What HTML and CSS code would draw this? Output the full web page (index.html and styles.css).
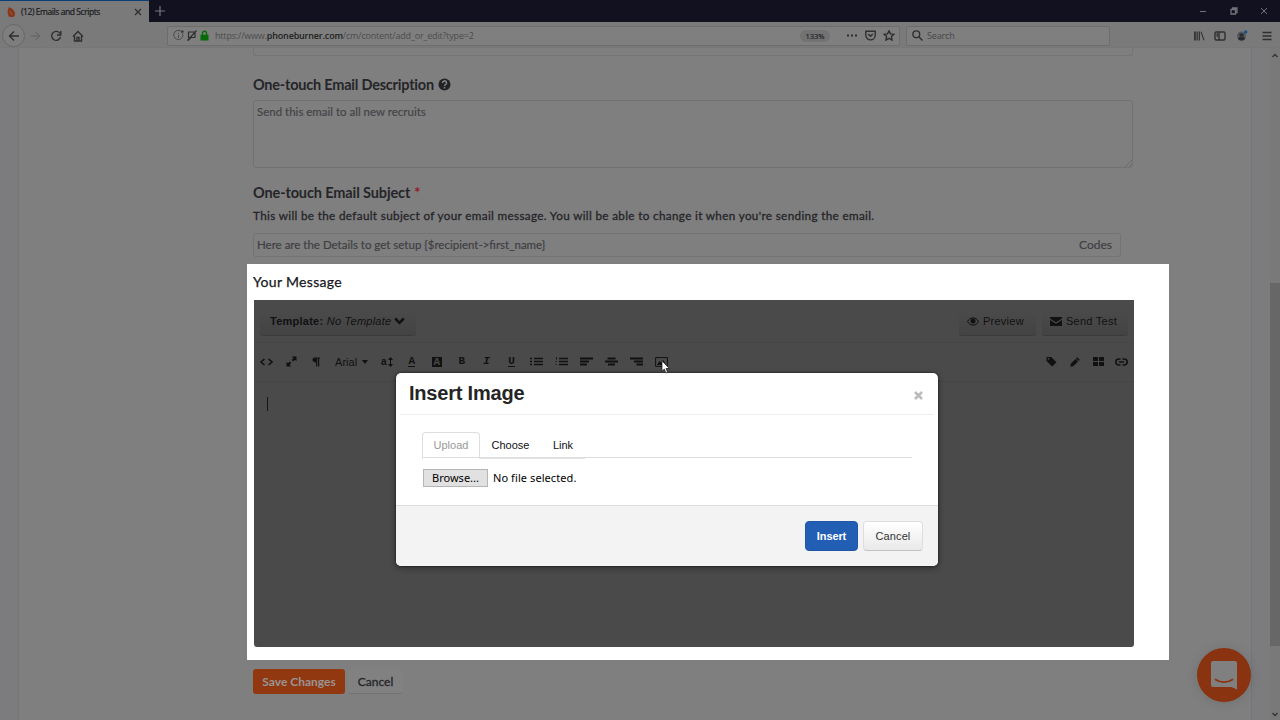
FILE: index.html
```
<!DOCTYPE html>
<html>
<head>
  <meta charset="utf-8">
  <title>(12) Emails and Scripts</title>
  <link rel="stylesheet" href="styles.css">
</head>
<body>
  <!-- Browser window -->
  <div class="tab-strip">
    <div class="tab">
      <svg class="favicon" width="9" height="10" viewBox="0 0 9 10"><path d="M2 0C4 1 8 3 8 6.500a3.500 3.500 0 0 1-7 .5C0 5 1 2 2 0z" fill="#8a3517"/><path d="M2.500 4l3 4" stroke="#7b6a62"/></svg>
      <span class="tab-title">(12) Emails and Scripts</span>
      <svg width="8" height="8" viewBox="0 0 8 8" class="line"><path d="M1 1l6 6M7 1L1 7"/></svg>
    </div>
    <svg class="new-tab" width="10" height="10" viewBox="0 0 10 10"><path d="M5 0v10M0 5h10"/></svg>
    <div class="window-buttons">
      <svg width="8" height="8" viewBox="0 0 8 8"><path d="M1 4.500h6"/></svg>
      <svg width="8" height="8" viewBox="0 0 8 8"><path d="M1 2.500h4.500V7H1zM2.500 2.500V1H7v4.500H5.500" stroke-width="1.300"/></svg>
      <svg width="8" height="8" viewBox="0 0 8 8"><path d="M1 1l6 6M7 1L1 7"/></svg>
    </div>
  </div>
  <div class="toolbar">
    <div class="nav">
      <span class="back"><svg width="12" height="12" viewBox="0 0 12 12" class="line"><path d="M11 6H1.500M6 1.500L1.500 6 6 10.500"/></svg></span>
      <svg width="11" height="12" viewBox="0 0 12 12" class="line faint"><path d="M1 6h9.500M6 1.500L10.500 6 6 10.500"/></svg>
      <svg width="12" height="12" viewBox="0 0 12 12" class="line"><path d="M10 3.500A4.500 4.500 0 1 0 10.500 7M10.800 1v4H7"/></svg>
      <svg width="12" height="12" viewBox="0 0 12 12" class="line"><path d="M1 6.500L6 1.500l5 5M2.500 6v5h7V6M5 11V7.500h2V11"/></svg>
    </div>
    <div class="url-bar">
      <svg width="11" height="11" viewBox="0 0 11 11" class="thin"><path d="M8 1.200a4.600 4.600 0 1 0 1.700 2.300M5.500 5v3M5.500 3v1"/><circle cx="9.300" cy="1.700" r="1" fill="#333"/></svg>
      <svg width="10" height="11" viewBox="0 0 10 11" class="line"><path d="M1.500 2h6.500v5.500H4L2 9.500V7.500h-.5zM.5 10.500l9-10" stroke-width="1.200"/></svg>
      <svg width="9" height="11" viewBox="0 0 9 11"><path d="M2.500 5V3.200a2 2 0 0 1 4 0V5" stroke="#076b07" stroke-width="1.400" fill="none"/><path d="M.5 4.800h8V10.500h-8z" fill="#076b07"/></svg>
      <span class="url">https://www.<b>phoneburner.com</b>/cm/content/add_or_edit?type=2</span>
      <span class="zoom">133%</span>
      <svg width="12" height="11" viewBox="0 0 12 11"><path d="M1 4.500h2v2H1zM5 4.500h2v2H5zM9 4.500h2v2H9z" fill="#2f2f30"/></svg>
      <svg width="11" height="11" viewBox="0 0 11 11" class="line"><path d="M.8 1.200h9.400v4a4.700 4.700 0 0 1-9.400 0zM3.200 4l2.300 2.200L7.800 4"/></svg>
      <svg width="12" height="11" viewBox="0 0 12 11" class="line"><path d="M6 .8l1.500 3.100 3.400.4-2.500 2.300.7 3.400L6 8.300 2.900 10l.7-3.400-2.500-2.300 3.400-.4z"/></svg>
    </div>
    <div class="search-bar">
      <svg width="11" height="11" viewBox="0 0 11 11" class="line"><circle cx="4.300" cy="4.300" r="3.400"/><path d="M7 7l3.500 3.500"/></svg>
      <span>Search</span>
    </div>
    <div class="toolbar-icons">
      <svg width="12" height="10" viewBox="0 0 12 10"><path d="M1 .5h1.800v9H1zM3.500.5h1.300v9H3.500zM5.700.5h1.300v9H5.700zM7.500 1l1-.4 3 8.500-1 .4z" fill="#333"/></svg>
      <svg width="12" height="10" viewBox="0 0 12 10" class="line"><rect x="1" y="1" width="10" height="8" rx="1.200"/><path d="M5 1v8M2.500 3.300h1.500M2.500 5h1.500"/></svg>
      <svg width="12" height="11" viewBox="0 0 12 11"><circle cx="5.500" cy="6" r="4.500" fill="#56585b"/><path d="M3.500 3.500h4v3h-4zM2 9c0-3 7-3 7 0-2 2-5 2-7 0z" fill="#292a2e"/><circle cx="9.700" cy="2" r="1.700" fill="#184e90"/></svg>
      <svg width="10" height="10" viewBox="0 0 10 10" class="line"><path d="M.5 1.500h9M.5 5h9M.5 8.500h9"/></svg>
    </div>
  </div>

  <!-- Page -->
  <div class="viewport">
    <div class="page">
      <div class="field-end"></div>
      <div class="label">
        <span class="label-text description">One-touch Email Description</span>
        <svg width="13" height="13" viewBox="0 0 13 13"><circle cx="6.500" cy="6.500" r="6" fill="#232326"/><path d="M4.500 5a2 2 0 1 1 3 1.600c-.8.4-1 .7-1 1.400M6.500 9v1.600" fill="none" stroke="#7f7f7f" stroke-width="1.600"/></svg>
      </div>
      <div class="description-box"><span>Send this email to all new recruits</span>
        <svg width="7" height="7" viewBox="0 0 7 7"><path d="M0 7l7-7M4 7l3-3" stroke="#606060" stroke-width=".7"/></svg>
      </div>
      <div class="label subject-label"><span class="label-text">One-touch Email Subject</span><span class="required">*</span></div>
      <div class="help"><span>This will be the default subject of your email message. You will be able to change it when you're sending the email.</span></div>
      <div class="subject-box"><span class="subject-text">Here are the Details to get setup {$recipient-&gt;first_name}</span><span class="codes">Codes</span></div>

      <div class="message">
        <div class="message-title">Your Message</div>
        <div class="editor">
          <div class="editor-header">
            <div class="editor-button template"><b>Template:</b>&nbsp;<i>No Template</i>
              <svg width="11" height="8" viewBox="0 0 11 8"><path d="M1.200 1.500l4.300 4.300 4.300-4.300" fill="none" stroke="#111" stroke-width="2.500"/></svg>
            </div>
            <div class="editor-button preview">
              <svg width="12" height="9" viewBox="0 0 12 9"><path d="M.5 4.500C3-.3 9-.3 11.500 4.500 9 9.300 3 9.300.5 4.500z" fill="none" stroke="#111"/><circle cx="6" cy="4" r="2.500" fill="#111"/></svg>
              <span>Preview</span>
            </div>
            <div class="editor-button send">
              <svg width="12" height="9" viewBox="0 0 12 9"><path d="M0 0h12v1.500L6 5.300 0 1.500zM0 3l6 3.700L12 3v6H0z" fill="#111"/></svg>
              <span>Send Test</span>
            </div>
          </div>
          <div class="format-bar">
            <span><svg width="13" height="8" viewBox="0 0 13 8"><path d="M4.500 1L1 4l3.500 3M8.500 1L12 4 8.500 7"/></svg></span>
            <span><svg width="11" height="11" viewBox="0 0 11 11"><path class="solid" d="M5.800.5h4.700v4.700L9 3.800 7.300 5.500 5.700 3.900l1.600-1.700zM.5 5.800L2 7.200l1.700-1.700 1.500 1.600-1.600 1.700 1.500 1.700H.5z"/></svg></span>
            <span><svg width="8" height="10" viewBox="0 0 8 10"><path class="solid" d="M3 .5h5v1H7.200v8H6v-8h-.8v8H4V5.500C-.5 5.500-.5.500 3 .5z"/></svg></span>
            <span class="font-name">Arial <i class="caret"></i></span>
            <span class="size">a<svg width="5" height="10" viewBox="0 0 5 10"><path d="M2.500 2v6" stroke-width="1"/><path class="solid" d="M0 3L2.500 0 5 3zM0 7l2.500 3L5 7z"/></svg></span>
            <span><b class="under">A</b></span>
            <span><b class="inverse">A</b></span>
            <span><b>B</b></span>
            <span><b class="italic">I</b></span>
            <span><b class="under">U</b></span>
            <span><svg width="13" height="9" viewBox="0 0 13 9"><path d="M4 1.500h9M4 4.500h9M4 7.500h9M0 1.500h2M0 4.500h2M0 7.500h2" stroke-width="1.700"/></svg></span>
            <span><svg width="13" height="9" viewBox="0 0 13 9"><path d="M4 1.500h9M4 4.500h9M4 7.500h9" stroke-width="1.700"/><path d="M1.500 0v2.500M.5 4.500h1.500M.5 7.500h1.500" stroke-width=".8"/></svg></span>
            <span><svg width="13" height="9" viewBox="0 0 13 9"><path d="M0 1.500h13M0 4.500h9M0 7.500h7" stroke-width="1.800"/></svg></span>
            <span><svg width="13" height="9" viewBox="0 0 13 9"><path d="M2.500 1.500h8M0 4.500h13M3 7.500h7" stroke-width="1.800"/></svg></span>
            <span><svg width="13" height="9" viewBox="0 0 13 9"><path d="M0 1.500h13M4 4.500h9M6.500 7.500H13" stroke-width="1.800"/></svg></span>
            <span><svg width="13" height="10" viewBox="0 0 13 10"><path d="M.6.6h11.800v8.800H.6z" stroke-width="1"/><path class="solid" d="M2 8l2.500-4 2 2L8.500 3 11 8z"/></svg></span>
            <div class="format-right">
              <span><svg width="11" height="11" viewBox="0 0 11 11"><path class="solid" d="M.5 1h4.700l5.300 5.300-4.300 4.200L.5 5zM2.500 2a.8.8 0 1 0 .1 0z" fill-rule="evenodd"/></svg></span>
              <span><svg width="10" height="10" viewBox="0 0 10 10"><path class="solid" d="M7.300.3L9.700 2.700 8.500 4 6 1.500zM5.500 2L8 4.500 3.200 9.300.3 9.700l.5-2.900z"/></svg></span>
              <span><svg width="11" height="9" viewBox="0 0 11 9"><path class="solid" d="M0 0h5v4H0zM6 0h5v4H6zM0 5h5v4H0zM6 5h5v4H6z"/></svg></span>
              <span><svg width="13" height="8" viewBox="0 0 13 8"><path d="M5.500 1H3.800a3 3 0 0 0 0 6h1.700M7.500 1h1.700a3 3 0 0 1 0 6H7.500M4 4h5"/></svg></span>
            </div>
          </div>
          <div class="editor-body"><span class="text-caret"></span></div>

          <div class="modal">
            <div class="modal-header">
              <h3>Insert Image</h3>
              <svg width="9" height="9" viewBox="0 0 9 9"><path d="M1 1l7 7M8 1L1 8" stroke="#bbb" stroke-width="2.500"/></svg>
            </div>
            <div class="modal-body">
              <div class="modal-tabs">
                <span class="modal-tab active">Upload</span>
                <span class="modal-tab choose">Choose</span>
                <span class="modal-tab link">Link</span>
              </div>
              <div class="file-row">
                <span class="browse">Browse...</span>
                <span class="file-name">No file selected.</span>
              </div>
            </div>
            <div class="modal-footer">
              <span class="modal-button primary">Insert</span>
              <span class="modal-button">Cancel</span>
            </div>
          </div>
          <svg class="cursor" width="9" height="14" viewBox="0 0 9 14"><path d="M1 .8v10.400l2.300-2.100 1.600 3.900 1.700-.7L5 8.500h3.300z" fill="#fff" stroke="#111" stroke-width=".7"/></svg>
        </div>
      </div>

      <div class="actions">
        <span class="save">Save Changes</span>
        <span class="cancel">Cancel</span>
      </div>
    </div>
    <div class="scrollbar">
      <svg width="6" height="5" viewBox="0 0 6 5"><path d="M.5 4L3 1.500 5.500 4"/></svg>
      <div class="thumb"></div>
      <svg width="6" height="5" viewBox="0 0 6 5"><path d="M.5 1L3 3.500 5.500 1"/></svg>
    </div>
  </div>

  <div class="chat">
    <svg width="26" height="29" viewBox="0 0 26 29"><path d="M2 0h22a2 2 0 0 1 2 2v26.500L20.500 26H2a2 2 0 0 1-2-2V2a2 2 0 0 1 2-2z" fill="#808080"/><path d="M4.500 18.500c5 3.600 12 3.600 17 0" fill="none" stroke="#8a3311" stroke-width="1.700" stroke-linecap="round"/></svg>
  </div>
</body>
</html>
```
FILE: styles.css
```
* {
  box-sizing: border-box;
}
body {
  margin: 0;
  width: 1280px;
  height: 720px;
  overflow: hidden;
  position: relative;
  display: flex;
  flex-direction: column;
  background: #7f7f7f;
  color: #252529;
  font-family: Lato, "Open Sans", sans-serif;
}
svg {
  display: block;
  flex: none;
}
span, b, h3 {
  white-space: nowrap;
}

/* browser */
.tab-strip {
  height: 22px;
  flex: none;
  display: flex;
  align-items: center;
  background: #11111f;
  font-family: "Open Sans", sans-serif;
}
.tab {
  width: 149px;
  height: 22px;
  display: flex;
  align-items: center;
  padding: 0 7px 0 7px;
  border-top: 1px solid #0b4078;
  background: #7a7a7b;
}
.tab-title {
  margin-left: 5px;
  flex: 1;
  font-size: 8.5px;
  letter-spacing: -0.43px;
  color: #1a1a1c;
  -webkit-text-stroke: 0.2px #1a1a1c;
}
.line {
  fill: none;
  stroke: #2f2f30;
  stroke-width: 1.4;
}
.thin {
  fill: none;
  stroke: #444;
  stroke-width: 0.9;
}
.faint {
  stroke: #5d5d5e;
  stroke-width: 1;
}
.new-tab {
  margin-left: 6px;
  stroke: #77777d;
  stroke-width: 1.2;
}
.window-buttons {
  margin-left: auto;
  padding-right: 12px;
  display: flex;
  gap: 22.500px;
  fill: none;
  stroke: #72727a;
  stroke-width: 1;
}
.toolbar {
  height: 26px;
  flex: none;
  display: flex;
  align-items: center;
  padding-top: 2px;
  background: #7a7a7b;
  border-bottom: 1px solid #777778;
  font-family: "Open Sans", sans-serif;
  font-size: 9px;
}
.nav {
  width: 167px;
  display: flex;
  align-items: center;
  gap: 9.500px;
  padding-left: 2px;
}
.nav .back {
  width: 23px;
  height: 23px;
  margin-right: -5px;
  border: 1px solid #686869;
  border-radius: 50%;
  display: flex;
  align-items: center;
  justify-content: center;
  background: #7e7e7e;
}
.url-bar {
  width: 733px;
  height: 20px;
  border: 1px solid #6d6d6e;
  border-radius: 2px;
  background: #7f7f7f;
  display: flex;
  align-items: center;
  gap: 3px;
  padding: 0 4px 0 5px;
}
.url {
  margin-left: 3px;
  flex: 1;
  color: #4c4c4d;
  letter-spacing: -0.18px;
}
.url b {
  font-weight: 600;
  color: #1e1e20;
}
.zoom {
  width: 30px;
  height: 12px;
  margin-right: 9px;
  border-radius: 6px;
  background: #727273;
  font-size: 7.5px;
  line-height: 12px;
  text-align: center;
  -webkit-text-stroke: 0.2px #252529;
}
.url-bar .zoom ~ svg {
  margin-left: 4px;
}
.search-bar {
  width: 204px;
  height: 20px;
  margin-left: 6px;
  border: 1px solid #6d6d6e;
  border-radius: 2px;
  background: #7f7f7f;
  display: flex;
  align-items: center;
  gap: 4px;
  padding-left: 5px;
  color: #464647;
}
.search-bar span {
  letter-spacing: -0.15px;
}
.toolbar-icons {
  margin-left: auto;
  padding-right: 8px;
  display: flex;
  align-items: center;
  gap: 9.500px;
}
.toolbar-icons svg:last-child {
  margin-left: 5px;
}

/* form */
.viewport {
  height: 672px;
  flex: none;
  display: flex;
  background: #7c7c7e;
}
.page {
  width: 1234px;
  margin-left: 18px;
  padding-left: 234px;
  border-left: 1px solid #757678;
  border-right: 1px solid #757678;
  background: #7f7f7f;
}
.field-end {
  width: 880px;
  height: 8px;
  border: 1px solid #747474;
  border-top: 0;
  border-radius: 0 0 3px 3px;
}
.label {
  height: 20px;
  margin-top: 19px;
  padding-bottom: 1px;
  display: flex;
  align-items: center;
  gap: 4px;
  font-size: 14.500px;
  font-weight: bold;
}
.label-text {
  letter-spacing: -0.12px;
}
.description {
  letter-spacing: -0.22px;
}
.subject-label {
  margin-top: 15px;
}
.required {
  color: #951b25;
}
.description-box {
  width: 880px;
  height: 68px;
  margin-top: 5px;
  padding: 3px 0 0 3px;
  border: 1px solid #727272;
  border-radius: 3px;
  display: flex;
  justify-content: space-between;
  font-size: 11.500px;
  line-height: 15px;
  color: #444448;
  -webkit-text-stroke: 0.2px #444448;
}
.description-box svg {
  align-self: flex-end;
}
.help {
  height: 20px;
  margin-top: 2px;
  line-height: 20px;
  font-size: 11.700px;
  letter-spacing: 0.35px;
  -webkit-text-stroke: 0.3px #252529;
}
.subject-box {
  width: 868px;
  height: 24px;
  margin-top: 8px;
  padding: 0 8px 1px 3px;
  border: 1px solid #737373;
  border-radius: 3px;
  display: flex;
  align-items: center;
  justify-content: space-between;
  font-size: 11.500px;
  color: #404044;
  -webkit-text-stroke: 0.2px #404044;
}
.codes {
  font-size: 12px;
}
.message {
  width: 922px;
  height: 396px;
  margin: 7px 0 0 -6px;
  padding: 0 0 0 7px;
  background: #fff;
}
.message-title {
  height: 36px;
  margin-left: -1px;
  line-height: 36px;
  font-size: 14px;
  letter-spacing: 0.32px;
  color: #171721;
  -webkit-text-stroke: 0.25px #171721;
}

/* editor */
.editor {
  position: relative;
  width: 880px;
  height: 347px;
  border-radius: 0 0 3px 3px;
  background: #4a4a4a;
  font-family: "Liberation Sans", Arial, sans-serif;
  color: #111;
}
.editor-header {
  height: 43px;
  padding: 8px 6px 0 6px;
  display: flex;
  gap: 6px;
  border-bottom: 1px solid #464646;
  font-size: 11px;
}
.editor-button {
  height: 28px;
  padding: 0 8px 1px;
  border-radius: 3px;
  border-bottom: 1px solid #3b3b3b;
  background: linear-gradient(#4b4b4b, #434343);
  display: flex;
  align-items: center;
  gap: 4px;
  letter-spacing: 0.25px;
}
.template {
  width: 156px;
  padding-left: 10px;
  gap: 0;
}
.template svg {
  margin-left: 3px;
}
.preview {
  width: 77px;
  margin-left: auto;
}
.send {
  width: 86px;
}
.format-bar {
  height: 39px;
  padding-bottom: 1px;
  display: flex;
  align-items: center;
  border-bottom: 1px solid #454545;
  font-size: 11px;
}
.format-bar span {
  width: 24.960px;
  display: flex;
  align-items: center;
  justify-content: center;
}
.format-bar svg {
  fill: none;
  stroke: #111;
  stroke-width: 1.6;
}
.format-bar .solid {
  fill: #111;
  stroke: none;
}
.format-bar .font-name {
  width: 45.500px;
  gap: 5px;
}
.caret {
  border: 3px solid transparent;
  border-top: 4px solid #111;
  border-bottom: 0;
}
.format-bar .size {
  gap: 1px;
  font-size: 10px;
  font-weight: bold;
}
.format-bar b {
  font-family: "Liberation Mono", monospace;
  line-height: 9px;
}
.under {
  border-bottom: 1px solid #111;
}
.format-bar .inverse {
  width: 10px;
  height: 10px;
  line-height: 10px;
  text-align: center;
  background: #111;
  color: #4a4a4a;
}
.italic {
  font-style: italic;
}
.format-right {
  margin-left: auto;
  padding-right: 1px;
  display: flex;
}
.format-bar .format-right span {
  width: 23.300px;
}
.editor-body {
  padding: 15px 13px;
}
.text-caret {
  display: block;
  width: 1px;
  height: 14px;
  background: #151515;
}

/* insert image */
.modal {
  position: absolute;
  left: 142px;
  top: 73px;
  width: 542px;
  height: 193px;
  display: flex;
  flex-direction: column;
  border-radius: 5px;
  overflow: hidden;
  background: #fff;
  box-shadow: 0 0 2px #111, 0 2px 6px rgba(0, 0, 0, 0.4);
}
.modal-header {
  height: 42px;
  margin: 0 4px;
  padding: 0 11px 0 9px;
  display: flex;
  align-items: center;
  justify-content: space-between;
  border-bottom: 1px solid #eee;
}
.modal-header h3 {
  margin: 0;
  font-size: 20px;
  line-height: 41px;
  letter-spacing: -0.2px;
  color: #252525;
}
.modal-header svg {
  margin-top: 3px;
}
.modal-body {
  height: 90px;
  padding: 17px 26px 0;
}
.modal-tabs {
  height: 26px;
  display: flex;
  border-bottom: 1px solid #ddd;
  font-size: 11px;
}
.modal-tab {
  height: 27px;
  line-height: 26px;
  text-align: center;
  border-bottom: 1px solid #e4e4e4;
}
.modal-tab.active {
  width: 58px;
  line-height: 25px;
  border: 1px solid #ddd;
  border-bottom-color: #fff;
  border-radius: 4px 4px 0 0;
  color: #999;
}
.choose {
  width: 61px;
}
.link {
  width: 44px;
}
.file-row {
  margin-top: 11px;
  display: flex;
  align-items: center;
  gap: 5px;
  font-family: "Noto Sans", sans-serif;
  font-size: 11px;
  line-height: 16px;
  color: #000;
}
.browse {
  width: 65px;
  height: 18px;
  margin-left: 1px;
  border: 1px solid #b5b5b5;
  background: #e1e1e1;
  text-align: center;
}
.file-name {
  letter-spacing: 0.08px;
}
.modal-footer {
  flex: 1;
  padding: 15px 15px 0;
  display: flex;
  justify-content: flex-end;
  gap: 5px;
  border-top: 1px solid #ddd;
  background: #f3f3f3;
}
.modal-button {
  width: 60px;
  height: 30px;
  border: 1px solid #dedede;
  border-bottom-color: #c4c4c4;
  border-radius: 4px;
  background: linear-gradient(#fff, #e9e9e9);
  line-height: 28px;
  text-align: center;
  font-size: 11px;
  letter-spacing: 0.1px;
  color: #333;
}
.modal-button.primary {
  width: 53px;
  border-color: #1f56a6;
  background: #235eb5;
  color: #fff;
  font-weight: bold;
  letter-spacing: -0.1px;
}
.cursor {
  position: absolute;
  left: 407px;
  top: 60px;
}

.actions {
  margin-top: 9px;
  display: flex;
  gap: 3px;
  font-size: 12px;
  line-height: 25px;
  text-align: center;
}
.save {
  width: 92px;
  height: 25px;
  border-radius: 3px;
  background: #913811;
  color: #989594;
  font-weight: bold;
}
.cancel {
  width: 55px;
  height: 25px;
  border-radius: 3px;
  border-bottom: 1px solid #717171;
  background: #818181;
  -webkit-text-stroke: 0.3px #252529;
}
.scrollbar {
  width: 10px;
  margin-left: auto;
  display: flex;
  flex-direction: column;
  align-items: center;
  background: #797979;
  padding: 5px 0 3px;
}
.scrollbar svg {
  fill: none;
  stroke: #333;
  stroke-width: 1.3;
}
.thumb {
  width: 10px;
  height: 363px;
  margin-top: 225px;
  margin-bottom: auto;
  background: #676767;
}
.chat {
  position: absolute;
  left: 1197px;
  top: 648px;
  width: 54px;
  height: 54px;
  border-radius: 50%;
  display: flex;
  align-items: center;
  justify-content: center;
  background: #8a3311;
  box-shadow: 0 1px 12px rgba(0, 0, 0, 0.12);
}
```
